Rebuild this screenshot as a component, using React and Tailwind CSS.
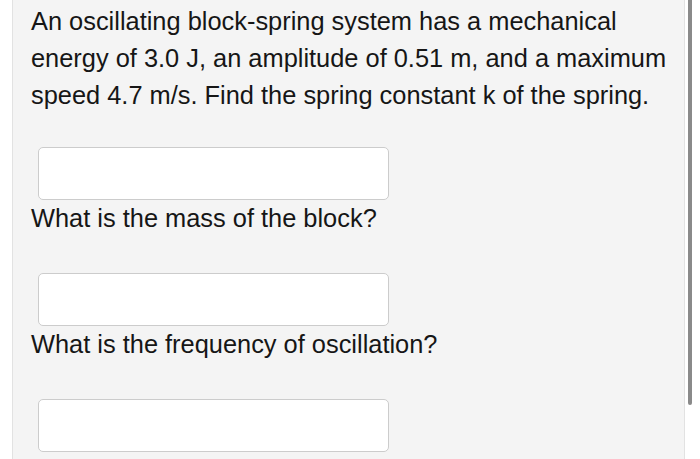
export default function App() {
  return (
    <div className="w-[700px] h-[459px] flex bg-white overflow-hidden font-['Liberation_Sans',Arial,sans-serif] text-[#161616]">
      <div className="w-[12px] shrink-0" />
      <div className="w-[673px] shrink-0 h-full bg-[#f4f4f4] border-x border-[#e2e2e2] pl-[18px] pt-[3px]">
        <p className="text-[25.4px] leading-[37px] whitespace-nowrap">
          An oscillating block-spring system has a mechanical
          <br />
          energy of 3.0 J, an amplitude of 0.51 m, and a maximum
          <br />
          speed 4.7 m/s. Find the spring constant k of the spring.
        </p>
        <div className="mt-[33px] ml-[7px] w-[351px] h-[53px] bg-white border border-[#cccccc] rounded-[5px]" />
        <p className="text-[25.4px] leading-[37px]">What is the mass of the block?</p>
        <div className="mt-[36px] ml-[7px] w-[351px] h-[53px] bg-white border border-[#cccccc] rounded-[5px]" />
        <p className="text-[25.4px] leading-[37px]">What is the frequency of oscillation?</p>
        <div className="mt-[36px] ml-[7px] w-[351px] h-[53px] bg-white border border-[#cccccc] rounded-[5px]" />
      </div>
      <div className="w-[3px] shrink-0" />
      <div className="w-[4px] h-[405px] bg-[#8a8a8a] rounded-b-[2px] shrink-0" />
    </div>
  );
}
